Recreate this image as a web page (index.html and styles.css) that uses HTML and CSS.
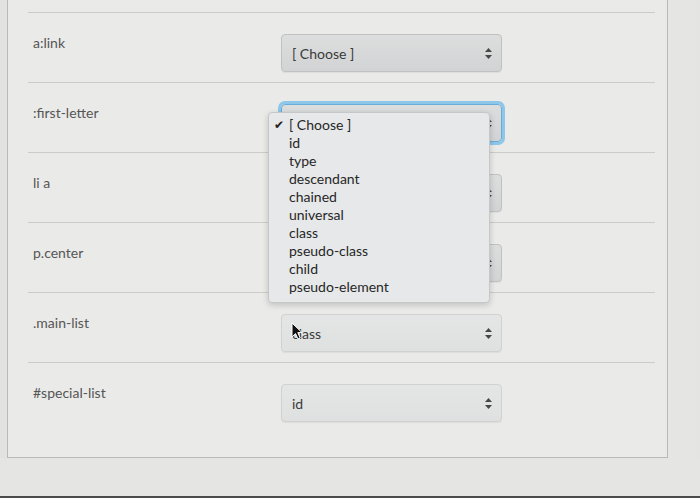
FILE: index.html
```html
<!DOCTYPE html>
<html>
<head>
<meta charset="utf-8">
<link rel="stylesheet" href="styles.css">
</head>
<body>
<div class="page">
  <div class="quiz">
    <div class="row">
      <div class="label">a:link</div>
      <div class="select"><span class="value">[ Choose ]</span><svg class="arrows" width="7" height="11" viewBox="0 0 7 11"><path d="M3.5 0L7 4H0Z M0 7H7L3.5 11Z"/></svg></div>
    </div>
    <div class="row">
      <div class="label">:first-letter</div>
      <div class="select focused"><span class="value"></span><svg class="arrows" width="7" height="11" viewBox="0 0 7 11"><path d="M3.5 0L7 4H0Z M0 7H7L3.5 11Z"/></svg>
        <ul class="menu">
          <li class="checked"><span class="check">✔</span>[ Choose ]</li>
          <li>id</li>
          <li>type</li>
          <li>descendant</li>
          <li>chained</li>
          <li>universal</li>
          <li>class</li>
          <li>pseudo-class</li>
          <li>child</li>
          <li>pseudo-element</li>
        </ul>
      </div>
    </div>
    <div class="row">
      <div class="label">li a</div>
      <div class="select"><span class="value"></span><svg class="arrows" width="7" height="11" viewBox="0 0 7 11"><path d="M3.5 0L7 4H0Z M0 7H7L3.5 11Z"/></svg></div>
    </div>
    <div class="row">
      <div class="label">p.center</div>
      <div class="select"><span class="value"></span><svg class="arrows" width="7" height="11" viewBox="0 0 7 11"><path d="M3.5 0L7 4H0Z M0 7H7L3.5 11Z"/></svg></div>
    </div>
    <div class="row">
      <div class="label">.main-list</div>
      <div class="select light"><span class="value">class</span><svg class="arrows" width="7" height="11" viewBox="0 0 7 11"><path d="M3.5 0L7 4H0Z M0 7H7L3.5 11Z"/></svg>
        <svg class="cursor" width="12" height="18" viewBox="0 0 12 18"><path d="M1 1V15L4.5 11.6L7 17L9.2 16L6.8 10.6H11Z"/></svg>
      </div>
    </div>
    <div class="row last">
      <div class="label">#special-list</div>
      <div class="select light"><span class="value">id</span><svg class="arrows" width="7" height="11" viewBox="0 0 7 11"><path d="M3.5 0L7 4H0Z M0 7H7L3.5 11Z"/></svg></div>
    </div>
  </div>
  <div class="below"></div>
  <div class="bar"></div>
</div>
</body>
</html>
```
FILE: styles.css
```css
html, body {
  margin: 0;
  padding: 0;
}
body {
  background: #e7e7e6;
  font-family: Lato, "Liberation Sans", sans-serif;
  font-size: 14px;
}
.page {
  width: 700px;
  height: 498px;
  display: flex;
  flex-direction: column;
  background: linear-gradient(90deg, #e2e2e1 0%, #ebebea 40%, #ececeb 75%, #e4e4e3 100%);
  overflow: hidden;
}
.quiz {
  margin-left: 7px;
  width: 661px;
  height: 458px;
  box-sizing: border-box;
  border: 1px solid #b9b9b8;
  border-top: none;
  padding: 12px 12px 0 20px;
  background: #eaeae9;
  display: flex;
  flex-direction: column;
}
.row {
  box-sizing: border-box;
  height: 70px;
  border-top: 1px solid #cbcbca;
  padding-top: 21px;
  display: grid;
  grid-template-columns: 253px 221px;
  align-items: start;
}
.row.last {
  flex: 1;
}
.label {
  padding-left: 5px;
  line-height: 18px;
  color: #555555;
}
.select {
  position: relative;
  box-sizing: border-box;
  height: 38px;
  border: 1px solid #c0c1c1;
  border-radius: 4px;
  background: linear-gradient(#dcdddd, #d2d3d4);
  box-shadow: 0 1px 1px rgba(0,0,0,0.06);
  display: flex;
  align-items: center;
  justify-content: space-between;
  padding: 0 9px 0 10px;
  color: #3a3a3a;
}
.select.light {
  background: linear-gradient(#e4e5e5, #dfe0e0);
  border-color: #d0d1d1;
}
.select.focused {
  border-color: #69acd7;
  box-shadow: 0 0 0 3px #8cc6e8;
}
.arrows {
  fill: #474747;
  flex: none;
}
.menu {
  position: absolute;
  left: -14px;
  top: 7px;
  width: 222px;
  margin: 0;
  padding: 3px 0 6px 0;
  list-style: none;
  box-sizing: border-box;
  background: #e6e8e9;
  border: 1px solid #c5c7c8;
  border-radius: 4px;
  box-shadow: 0 2px 6px rgba(0,0,0,0.18);
  z-index: 5;
  color: #262626;
}
.menu li {
  height: 18px;
  line-height: 18px;
  padding-left: 20px;
  position: relative;
  white-space: nowrap;
}
.check {
  position: absolute;
  left: 5px;
  top: 0;
  font-family: "DejaVu Sans", sans-serif;
  font-size: 12px;
  color: #222;
}
.cursor {
  position: absolute;
  left: 9px;
  top: 7px;
  fill: #111;
  stroke: #fff;
  stroke-width: 1;
}
.below {
  flex: 1;
  background: #e5e5e4;
}
.bar {
  height: 2px;
  background: #4b4b4b;
}
```
